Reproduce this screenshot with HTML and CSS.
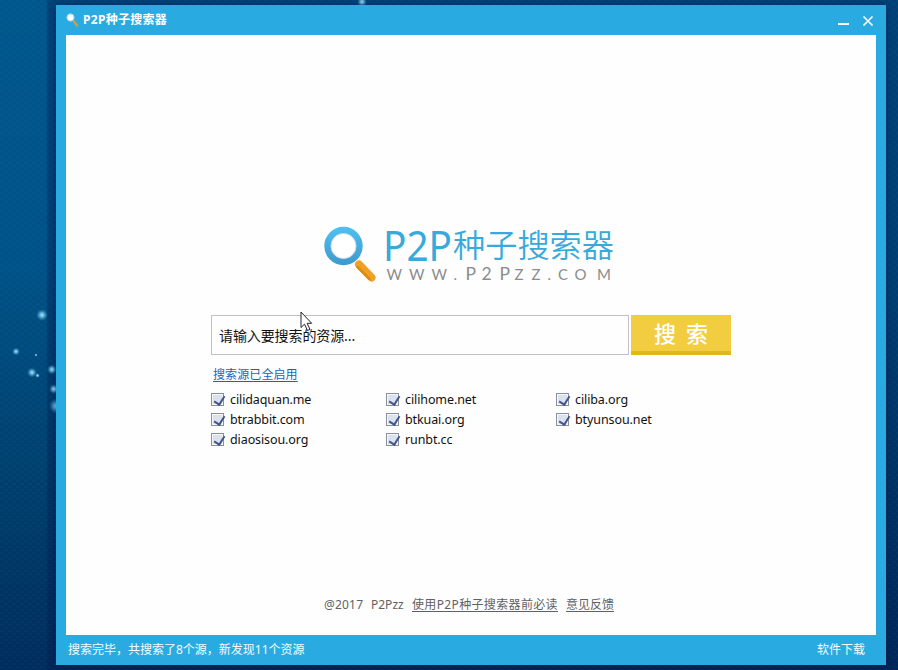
FILE: index.html
```html
<!DOCTYPE html>
<html lang="zh-CN">
<head>
<meta charset="utf-8">
<title>P2P种子搜索器</title>
<link rel="stylesheet" href="styles.css">
</head>
<body>
<div class="desktop">
  <svg class="stars" width="898" height="670" viewBox="0 0 898 670" aria-hidden="true">
    <defs>
      <radialGradient id="glow">
        <stop offset="0" stop-color="#a5ecff"/>
        <stop offset=".4" stop-color="#6fc0e6" stop-opacity=".8"/>
        <stop offset="1" stop-color="#2a86c0" stop-opacity="0"/>
      </radialGradient>
      <pattern id="weave" width="8" height="6" patternUnits="userSpaceOnUse">
        <path d="M0 1h4M4 4h4" stroke="#1676a8" stroke-opacity=".13"/>
        <path d="M4 1h4M0 4h4" stroke="#001f4a" stroke-opacity=".1"/>
      </pattern>
    </defs>
    <rect width="898" height="670" fill="url(#weave)"/>
    <g fill="url(#glow)">
      <circle cx="42" cy="315" r="6"/>
      <circle cx="16" cy="351.500" r="4"/>
      <circle cx="36" cy="355" r="1.800"/>
      <circle cx="32" cy="372.500" r="5"/>
      <circle cx="37.500" cy="375.500" r="2.500"/>
      <circle cx="52" cy="369.500" r="5"/>
      <circle cx="54" cy="389" r="5"/>
      <circle cx="57" cy="406" r="8"/>
      <circle cx="362" cy="2" r="5"/>
    </g>
  </svg>
  <div class="window">
    <header class="titlebar">
      <svg class="app-icon" width="14" height="14" viewBox="0 0 14 14">
        <path d="M8 8.500l3 4" stroke="#d99a3c" stroke-width="2.400" stroke-linecap="round"/>
        <circle cx="4.500" cy="4.500" r="3.700" fill="#fff" stroke="#8ccdf0" stroke-width="1"/>
      </svg>
      <h1 class="title">P2P种子搜索器</h1>
      <svg class="controls" width="38" height="14" viewBox="0 0 38 14">
        <path d="M2 11h11" stroke="#fff" stroke-width="2"/>
        <path d="M27.500 3.500l9 9M36.500 3.500l-9 9" stroke="#fff" stroke-width="1.700"/>
      </svg>
    </header>
    <main class="content">
      <svg class="logo" width="300" height="80" viewBox="320 210 300 80">
        <defs>
          <linearGradient id="ring" x2="0" y2="1"><stop stop-color="#4dbef0"/><stop offset="1" stop-color="#409bd0"/></linearGradient>
        </defs>
        <path d="M359 264.500l12.500 13" stroke="#f0a022" stroke-width="8" stroke-linecap="round"/>
        <path d="M357.500 267l12 12" stroke="#d98c18" stroke-width="2.500" stroke-linecap="round"/>
        <circle cx="343.500" cy="246" r="16" fill="#fff" stroke="url(#ring)" stroke-width="6.500"/>
        <circle cx="343.500" cy="246" r="12.500" fill="none" stroke="#bfd0dc" stroke-width=".7"/>
        <text class="logo-latin" x="383" y="260.500" textLength="69" lengthAdjust="spacingAndGlyphs">P2P</text>
        <text class="logo-name" x="453" y="257" textLength="161" lengthAdjust="spacingAndGlyphs">种子搜索器</text>
        <text class="logo-url" y="280" x="386.500 409 431.500 453.500 465.500 481.500 499.500 514.500 531.500 547.500 558 574.500 597">WWW.<tspan class="tall">P2P</tspan>ZZ.COM</text>
      </svg>
      <form class="search">
        <div class="query">请输入要搜索的资源...</div>
        <button class="submit" type="button">搜索</button>
      </form>
      <a class="sources-link">搜索源已全启用</a>
      <div class="sources">
        <label class="source"><i class="box"></i><span>cilidaquan.me</span></label>
        <label class="source"><i class="box"></i><span>cilihome.net</span></label>
        <label class="source"><i class="box"></i><span>ciliba.org</span></label>
        <label class="source"><i class="box"></i><span>btrabbit.com</span></label>
        <label class="source"><i class="box"></i><span>btkuai.org</span></label>
        <label class="source"><i class="box"></i><span>btyunsou.net</span></label>
        <label class="source"><i class="box"></i><span>diaosisou.org</span></label>
        <label class="source"><i class="box"></i><span>runbt.cc</span></label>
      </div>
      <footer class="footer">
        <span class="copy">@2017</span><span class="brand">P2Pzz</span>
        <span class="terms"><a>使用P2P种子搜索器前必读</a></span><a>意见反馈</a>
      </footer>
    </main>
    <div class="status"><span class="result">搜索完毕，共搜索了8个源，新发现11个资源</span><span>软件下载</span></div>
  </div>
  <svg class="cursor" width="14" height="22" viewBox="0 0 14 22">
    <path d="M1 1v15.500l3.500-3.300 3 6.300 2.500-1.100-2.900-6.100h4.600z" fill="#fff" stroke="#22222e" stroke-width="1"/>
  </svg>
</div>
</body>
</html>
```

FILE: styles.css
```css
* { box-sizing: border-box; }
body {
  margin: 0;
  font: 12px/16px "Noto Sans", "Noto Sans CJK SC", sans-serif;
}
.desktop {
  position: relative;
  width: 898px;
  height: 670px;
  overflow: hidden;
  background:
    linear-gradient(90deg, transparent 46px, rgba(0, 25, 80, .35) 48px),
    linear-gradient(#00588e 0, #005388 40%, #00416f 70%, #002d5c 100%);
}
.stars { position: absolute; left: 0; top: 0; }
.window {
  position: absolute;
  left: 56px;
  top: 5px;
  width: 830px;
  height: 660px;
  display: flex;
  flex-direction: column;
  padding: 0 10px;
  background: #29abe2;
  box-shadow: 0 0 6px rgba(0, 20, 60, .55);
}
.titlebar { display: flex; height: 30px; align-items: center; flex: none; }
.app-icon { margin-right: 3px; }
.title { margin: 0; font-size: 12px; line-height: 30px; font-weight: 700; color: #fff; letter-spacing: .3px; }
.controls { margin-left: auto; margin-right: 2px; }
.content { height: 600px; background: #fefefe; display: flex; flex-direction: column; padding: 0 145px; }
.logo { flex: none; margin: 175px 0 0 109px; }
.logo-latin { font: 400 41px "Noto Sans", sans-serif; fill: #38a9dc; }
.logo-name { font: 350 32px "Noto Sans CJK SC", sans-serif; fill: #38a9dc; }
.logo-url { font: 400 15px Lato, sans-serif; fill: #8c8c8c; }
.tall { font-size: 17.500px; }
.search { display: flex; gap: 2px; margin-top: 25px; height: 40px; }
.query { width: 418px; border: 1px solid #bfc0cc; padding: 0 7px; font-size: 14px; line-height: 40px; color: #111; letter-spacing: -.1px; white-space: nowrap; }
.submit { width: 100px; border: 0; border-bottom: 4px solid #e0b81e; padding: 0 0 2px 10px; background: #f3cd40; color: #fff; font: 500 22px/34px "Noto Sans CJK SC", sans-serif; letter-spacing: 10px; }
.sources-link { align-self: flex-start; margin: 12px 0 0 2px; color: #1068bd; letter-spacing: .1px; text-decoration: underline; text-underline-offset: 2px; }
.sources { display: grid; grid-template-columns: 175px 170px 175px; grid-auto-rows: 20px; margin-top: 7px; }
.source { display: flex; align-items: center; gap: 6px; font-size: 12.500px; letter-spacing: -.1px; color: #111; }
.box { width: 13px; height: 13px; margin-bottom: 1px; border: 1px solid #8b919b; background: #dce2ec; box-shadow: inset 0 0 0 1px #f6f7fa; position: relative; }
.box::after { content: ""; position: absolute; left: 3.500px; top: 0; width: 5px; height: 9px; border: solid #40558f; border-width: 0 2px 2px 0; transform: rotate(32deg); }
.footer { display: flex; margin: auto 0 22px 113px; color: #5e6264; white-space: nowrap; }
.footer a { text-decoration: underline; text-underline-offset: 2px; }
.copy { width: 47px; letter-spacing: .2px; }
.brand { width: 41px; }
.terms { width: 154px; letter-spacing: .35px; }
.status { display: flex; justify-content: space-between; height: 30px; line-height: 29px; padding: 0 11px 0 2px; color: #f4fcff; }
.cursor { position: absolute; left: 300px; top: 311px; }
```
